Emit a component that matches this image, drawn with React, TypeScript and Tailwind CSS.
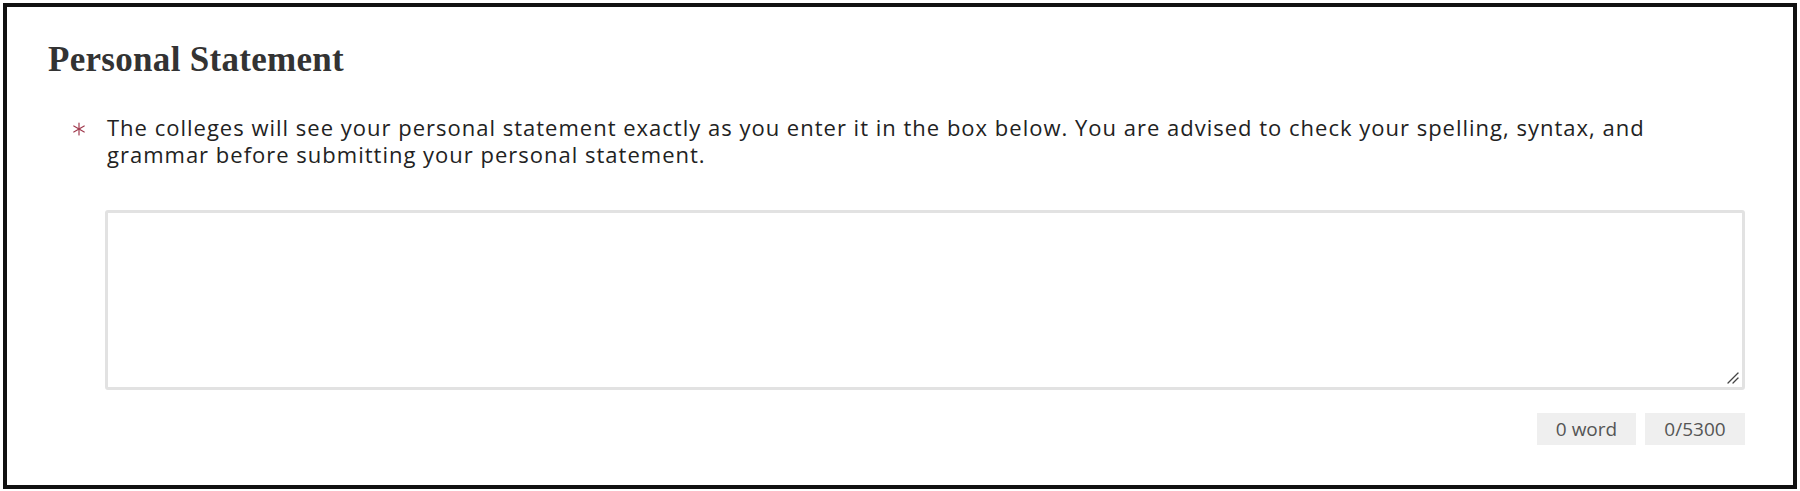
export default function App() {
  return (
    <div className="h-[491px] w-[1800px] bg-white p-[3px]">
      <div className="flex h-[486px] flex-col border-4 border-[#111] bg-white pl-[41px] pr-[48px]">
        <h2 className="mt-[33px] font-['Liberation_Serif',serif] text-[35px] leading-[40px] font-semibold tracking-[0.3px] text-[#333]">
          Personal Statement
        </h2>

        <div className="mt-[34px] flex items-start">
          <svg width="14" height="14" viewBox="0 0 14 14" className="mt-[8px] ml-[24px] shrink-0" aria-hidden>
            <g stroke="#a0394d" strokeWidth="1.2" strokeLinecap="round">
              <line x1="7" y1="1" x2="7" y2="13" />
              <line x1="1.8" y1="4" x2="12.2" y2="10" />
              <line x1="1.8" y1="10" x2="12.2" y2="4" />
            </g>
          </svg>
          <p className="ml-[21px] max-w-[1580px] font-['Open_Sans',sans-serif] text-[22px] leading-[27px] tracking-[1px] text-[#222]">
            The colleges will see your personal statement exactly as you enter it in the box below. You are advised to check your spelling, syntax, and grammar before submitting your personal statement.
          </p>
        </div>

        <div className="mt-[42px] ml-[57px] flex flex-col items-end">
          <div className="relative w-full">
            <textarea
              className="block h-[180px] w-full resize-none rounded-[3px] border-[3px] border-[#e2e2e2] bg-white outline-none"
              aria-label="Personal statement"
            />
            <svg width="14" height="14" viewBox="0 0 14 14" className="pointer-events-none absolute right-[5px] bottom-[5px]" aria-hidden>
              <g stroke="#444" strokeWidth="1.3" strokeLinecap="round">
                <line x1="2" y1="12" x2="12" y2="2" />
                <line x1="7" y1="12" x2="12" y2="7" />
              </g>
            </svg>
          </div>
          <div className="mt-[23px] flex gap-[9px] font-['Open_Sans',sans-serif] text-[19px] text-[#555]">
            <span className="flex h-[32px] w-[99px] items-center justify-center bg-[#efefef]">0 word</span>
            <span className="flex h-[32px] w-[100px] items-center justify-center bg-[#efefef]">0/5300</span>
          </div>
        </div>
      </div>
    </div>
  );
}
